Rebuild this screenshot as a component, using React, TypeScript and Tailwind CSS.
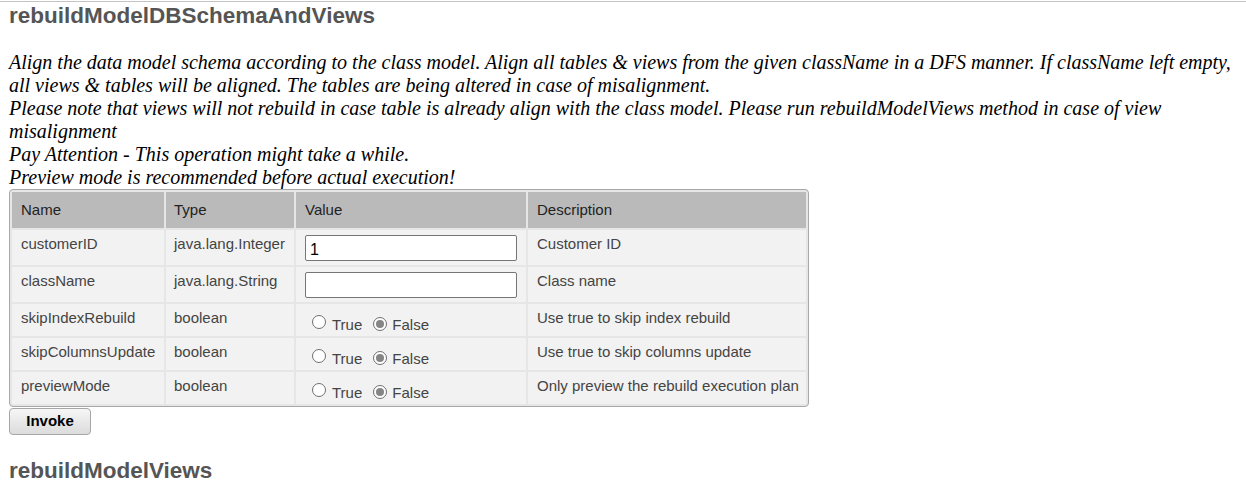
import React from 'react';

type Param = {
  name: string;
  type: string;
  kind: 'text' | 'bool';
  value?: string;
  description: string;
};

const PARAMS: Param[] = [
  { name: 'customerID', type: 'java.lang.Integer', kind: 'text', value: '1', description: 'Customer ID' },
  { name: 'className', type: 'java.lang.String', kind: 'text', value: '', description: 'Class name' },
  { name: 'skipIndexRebuild', type: 'boolean', kind: 'bool', description: 'Use true to skip index rebuild' },
  { name: 'skipColumnsUpdate', type: 'boolean', kind: 'bool', description: 'Use true to skip columns update' },
  { name: 'previewMode', type: 'boolean', kind: 'bool', description: 'Only preview the rebuild execution plan' },
];

const sans = "font-['Liberation_Sans',Arial,sans-serif]";

function Radio({ checked }: { checked?: boolean }) {
  return (
    <span className="inline-flex items-center justify-center w-[14px] h-[14px] rounded-full border border-[#6f6f6f] bg-white shrink-0">
      {checked && <span className="w-[8px] h-[8px] rounded-full bg-[#858585]" />}
    </span>
  );
}

export default function App() {
  return (
    <div className={`${sans} bg-white min-h-[485px]`}>
      <div className="mt-px h-px bg-[#c4c4c4]" />
      <div className="pl-[9px]">
        <h2 className="mt-px text-[22.5px] leading-[25px] font-bold text-[#555]">rebuildModelDBSchemaAndViews</h2>

        <div className="mt-[23px] font-['Liberation_Serif','Times_New_Roman',serif] italic text-[20px] leading-[23px] text-black pr-[8px]">
          <p>Align the data model schema according to the class model. Align all tables &amp; views from the given className in a DFS manner. If className left empty, all views &amp; tables will be aligned. The tables are being altered in case of misalignment.</p>
          <p>Please note that views will not rebuild in case table is already align with the class model. Please run rebuildModelViews method in case of view misalignment</p>
          <p>Pay Attention - This operation might take a while.</p>
          <p>Preview mode is recommended before actual execution!</p>
        </div>

        {/* Parameters */}
        <div className="w-[800px] border border-[#a8a8a8] rounded-[4px] bg-[#e6e6e6] overflow-hidden">
          <table className="w-full table-fixed border-separate border-spacing-[2px] text-[15px] whitespace-nowrap">
            <thead>
              <tr className="bg-[#bababa] text-[#222] h-[36px]">
                <th className="w-[152px] text-left font-normal px-[9px]">Name</th>
                <th className="w-[128px] text-left font-normal px-[8px]">Type</th>
                <th className="w-[230px] text-left font-normal px-[9px]">Value</th>
                <th className="text-left font-normal px-[9px]">Description</th>
              </tr>
            </thead>
            <tbody>
              {PARAMS.map(p => (
                <tr key={p.name} className={`bg-[#f2f2f2] text-[#444] ${p.kind === 'text' ? 'h-[35px]' : 'h-[32px]'}`}>
                  <td className="align-top px-[9px] pt-[5px] leading-[17px]">{p.name}</td>
                  <td className="align-top px-[8px] pt-[5px] leading-[17px]">{p.type}</td>
                  <td className="align-top px-[9px] pt-[5px] leading-[17px]">
                    {p.kind === 'text' ? (
                      <input readOnly value={p.value}
                        className="block w-[212px] h-[26px] border border-[#767676] rounded-[2px] bg-white px-[4px] pt-[3px] text-[16px] text-black outline-none" />
                    ) : (
                      <div className="flex items-center pt-[4px] pl-[7px] h-[22px] text-[#444]">
                        <Radio />
                        <span className="ml-[6px] mt-[4px]">True</span>
                        <span className="ml-[11px]"><Radio checked /></span>
                        <span className="ml-[5px] mt-[4px]">False</span>
                      </div>
                    )}
                  </td>
                  <td className="align-top px-[9px] pt-[5px] leading-[17px]">{p.description}</td>
                </tr>
              ))}
            </tbody>
          </table>
        </div>

        <button className="mt-px h-[27px] w-[82px] rounded-[4px] border border-[#a6a6a6] bg-gradient-to-b from-[#f6f6f6] to-[#dcdcdc] text-[15px] font-bold text-black">
          Invoke
        </button>

        <h2 className="mt-[23px] text-[22.5px] leading-[25px] font-bold text-[#555]">rebuildModelViews</h2>
      </div>
    </div>
  );
}
